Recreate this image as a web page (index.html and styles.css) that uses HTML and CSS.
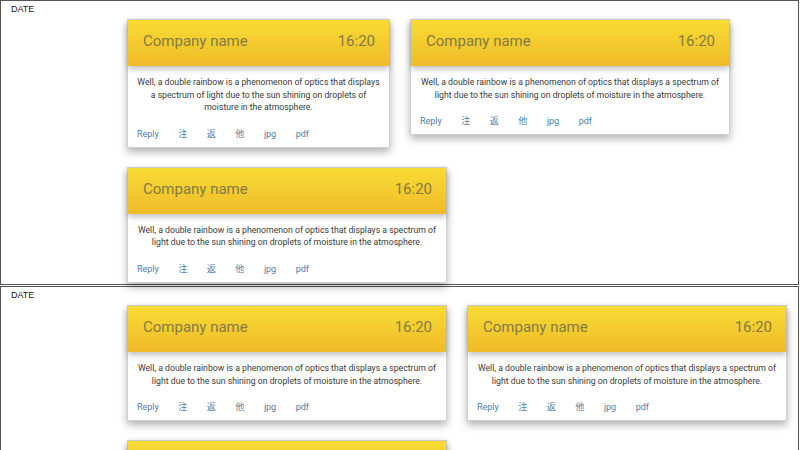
FILE: index.html
```html
<!DOCTYPE html>
<html>
<head>
<meta charset="utf-8">
<link rel="stylesheet" href="styles.css">
</head>
<body>
<section class="day">
  <div class="date">DATE</div>
  <div class="cards">
    <div class="card card--narrow">
      <div class="card-head"><span>Company name</span><span>16:20</span></div>
      <p class="card-text">Well, a double rainbow is a phenomenon of optics that displays a spectrum of light due to the sun shining on droplets of moisture in the atmosphere.</p>
      <div class="card-links"><a>Reply</a><a>注</a><a>返</a><a>他</a><a>jpg</a><a>pdf</a></div>
    </div>
    <div class="card">
      <div class="card-head"><span>Company name</span><span>16:20</span></div>
      <p class="card-text">Well, a double rainbow is a phenomenon of optics that displays a spectrum of light due to the sun shining on droplets of moisture in the atmosphere.</p>
      <div class="card-links"><a>Reply</a><a>注</a><a>返</a><a>他</a><a>jpg</a><a>pdf</a></div>
    </div>
    <div class="card">
      <div class="card-head"><span>Company name</span><span>16:20</span></div>
      <p class="card-text">Well, a double rainbow is a phenomenon of optics that displays a spectrum of light due to the sun shining on droplets of moisture in the atmosphere.</p>
      <div class="card-links"><a>Reply</a><a>注</a><a>返</a><a>他</a><a>jpg</a><a>pdf</a></div>
    </div>
  </div>
</section>
<section class="day">
  <div class="date">DATE</div>
  <div class="cards">
    <div class="card">
      <div class="card-head"><span>Company name</span><span>16:20</span></div>
      <p class="card-text">Well, a double rainbow is a phenomenon of optics that displays a spectrum of light due to the sun shining on droplets of moisture in the atmosphere.</p>
      <div class="card-links"><a>Reply</a><a>注</a><a>返</a><a>他</a><a>jpg</a><a>pdf</a></div>
    </div>
    <div class="card">
      <div class="card-head"><span>Company name</span><span>16:20</span></div>
      <p class="card-text">Well, a double rainbow is a phenomenon of optics that displays a spectrum of light due to the sun shining on droplets of moisture in the atmosphere.</p>
      <div class="card-links"><a>Reply</a><a>注</a><a>返</a><a>他</a><a>jpg</a><a>pdf</a></div>
    </div>
    <div class="card">
      <div class="card-head"><span>Company name</span><span>16:20</span></div>
      <p class="card-text">Well, a double rainbow is a phenomenon of optics that displays a spectrum of light due to the sun shining on droplets of moisture in the atmosphere.</p>
      <div class="card-links"><a>Reply</a><a>注</a><a>返</a><a>他</a><a>jpg</a><a>pdf</a></div>
    </div>
  </div>
</section>
</body>
</html>
```

FILE: styles.css
```css
html, body {
  margin: 0;
  padding: 0;
  background: #fff;
}
body {
  font-family: Roboto, "Noto Sans CJK JP", sans-serif;
  width: 799px;
  height: 450px;
  overflow: hidden;
}
.day {
  display: flex;
  align-items: flex-start;
  height: 283px;
  border: 1px solid #555;
  margin-bottom: 1px;
}
.date {
  width: 116px;
  flex: none;
  padding: 3px 0 0 10px;
  box-sizing: border-box;
  font-family: "Liberation Sans", Arial, sans-serif;
  font-size: 9px;
  color: #222;
}
.cards {
  display: flex;
  flex-wrap: wrap;
  align-items: flex-start;
  gap: 19px 20px;
  padding: 18px 0 0 10px;
  flex: 1;
}
.card {
  width: 320px;
  box-sizing: border-box;
  background: #fff;
  border: 1px solid #cfcfcf;
  box-shadow: 0 4px 8px rgba(0, 0, 0, 0.3);
}
.card--narrow {
  width: 263px;
}
.card-head {
  height: 46px;
  box-sizing: border-box;
  display: flex;
  align-items: center;
  justify-content: space-between;
  padding: 0 14px 4px 15px;
  background: linear-gradient(#f8dc34, #efbb29);
  box-shadow: 0 3px 6px rgba(0, 0, 0, 0.25);
  font-size: 15px;
  color: #847a45;
  position: relative;
}
.card-text {
  margin: 0;
  padding: 10px 6px 0;
  text-align: center;
  font-size: 8.7px;
  line-height: 12.5px;
  color: #3a3a3a;
}
.card-links {
  display: flex;
  gap: 19.5px;
  padding: 15px 9px 7px;
  font-size: 9px;
  line-height: 11px;
  color: #4f80a9;
}
```
